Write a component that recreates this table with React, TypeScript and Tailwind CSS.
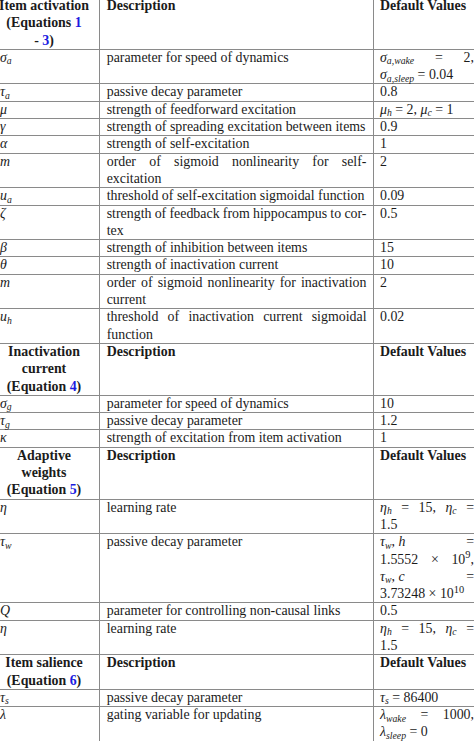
import type { ReactNode } from 'react'

// Parameter table, cropped on both sides like the source figure
const LINE = 'leading-[17.29px]'

function V({ b, s }: { b: string; s?: string }) {
  return (
    <span className="whitespace-nowrap">
      <i>{b}</i>
      {s && (
        <sub className="text-[70%]">
          <i>{s}</i>
        </sub>
      )}
    </span>
  )
}

function L({ children }: { children: ReactNode }) {
  return <div className="whitespace-nowrap">{children}</div>
}

function J({ parts }: { parts: ReactNode[] | string }) {
  const items = typeof parts === 'string' ? parts.split(' ') : parts
  return (
    <div className="flex justify-between whitespace-nowrap">
      {items.map((p, i) => (
        <span key={i}>{p}</span>
      ))}
    </div>
  )
}

function Ref({ n }: { n: string }) {
  return <span className="text-[#1c1ce0]">{n}</span>
}

function Row({ c1, c2, c3, head }: { c1: ReactNode; c2: ReactNode; c3: ReactNode; head?: boolean }) {
  return (
    <div className="border-t border-[#8a8a8a]">
      <div className={`-mt-px grid grid-cols-[111px_274px_1fr] ${head ? 'font-bold' : ''}`}>
        <div className={`border-r border-[#8a8a8a] ${head ? 'pl-[7px] pr-[7px] text-center' : 'pl-[11px] pr-[5px]'}`}>{c1}</div>
        <div className="border-r border-[#8a8a8a] pl-[6.7px] pr-[6.5px]">{c2}</div>
        <div className="pl-[6px] pr-[7px]">{c3}</div>
      </div>
    </div>
  )
}

const eta = (
  <>
    <J parts={[<V b="η" s="h" />, '=', '15,', <V b="η" s="c" />, '=']} />
    <L>1.5</L>
  </>
)

export default function App() {
  return (
    <div className="h-[741px] w-[474px] overflow-hidden bg-white">
      <div
        className={`-ml-[11px] -mt-[3px] w-[492px] font-['Liberation_Serif','Times_New_Roman',serif] text-[13.9px] text-[#1b1b1b] ${LINE}`}
      >
        <Row
          head
          c1={
            <>
              <L>Item activation</L>
              <L>
                (Equations <Ref n="1" />
              </L>
              <L>
                - <Ref n="3" />)
              </L>
            </>
          }
          c2={<L>Description</L>}
          c3={<L>Default Values</L>}
        />
        <Row
          c1={<V b="σ" s="a" />}
          c2={<L>parameter for speed of dynamics</L>}
          c3={
            <>
              <J parts={[<V b="σ" s="a,wake" />, '=', '2,']} />
              <L>
                <V b="σ" s="a,sleep" /> = 0.04
              </L>
            </>
          }
        />
        <Row c1={<V b="τ" s="a" />} c2={<L>passive decay parameter</L>} c3={<L>0.8</L>} />
        <Row
          c1={<V b="μ" />}
          c2={<L>strength of feedforward excitation</L>}
          c3={
            <L>
              <V b="μ" s="h" /> = 2, <V b="μ" s="c" /> = 1
            </L>
          }
        />
        <Row c1={<V b="γ" />} c2={<L>strength of spreading excitation between items</L>} c3={<L>0.9</L>} />
        <Row c1={<V b="α" />} c2={<L>strength of self-excitation</L>} c3={<L>1</L>} />
        <Row
          c1={<V b="m" />}
          c2={
            <>
              <J parts="order of sigmoid nonlinearity for self-" />
              <L>excitation</L>
            </>
          }
          c3={<L>2</L>}
        />
        <Row c1={<V b="u" s="a" />} c2={<L>threshold of self-excitation sigmoidal function</L>} c3={<L>0.09</L>} />
        <Row
          c1={<V b="ζ" />}
          c2={
            <>
              <J parts="strength of feedback from hippocampus to cor-" />
              <L>tex</L>
            </>
          }
          c3={<L>0.5</L>}
        />
        <Row c1={<V b="β" />} c2={<L>strength of inhibition between items</L>} c3={<L>15</L>} />
        <Row c1={<V b="θ" />} c2={<L>strength of inactivation current</L>} c3={<L>10</L>} />
        <Row
          c1={<V b="m" />}
          c2={
            <>
              <J parts="order of sigmoid nonlinearity for inactivation" />
              <L>current</L>
            </>
          }
          c3={<L>2</L>}
        />
        <Row
          c1={<V b="u" s="h" />}
          c2={
            <>
              <J parts="threshold of inactivation current sigmoidal" />
              <L>function</L>
            </>
          }
          c3={<L>0.02</L>}
        />
        <Row
          head
          c1={
            <>
              <L>Inactivation</L>
              <L>current</L>
              <L>
                (Equation <Ref n="4" />)
              </L>
            </>
          }
          c2={<L>Description</L>}
          c3={<L>Default Values</L>}
        />
        <Row c1={<V b="σ" s="g" />} c2={<L>parameter for speed of dynamics</L>} c3={<L>10</L>} />
        <Row c1={<V b="τ" s="g" />} c2={<L>passive decay parameter</L>} c3={<L>1.2</L>} />
        <Row c1={<V b="κ" />} c2={<L>strength of excitation from item activation</L>} c3={<L>1</L>} />
        <Row
          head
          c1={
            <>
              <L>Adaptive</L>
              <L>weights</L>
              <L>
                (Equation <Ref n="5" />)
              </L>
            </>
          }
          c2={<L>Description</L>}
          c3={<L>Default Values</L>}
        />
        <Row c1={<V b="η" />} c2={<L>learning rate</L>} c3={eta} />
        <Row
          c1={<V b="τ" s="w" />}
          c2={<L>passive decay parameter</L>}
          c3={
            <>
              <J
                parts={[
                  <>
                    <V b="τ" s="w" />, <i>h</i>
                  </>,
                  '=',
                ]}
              />
              <J
                parts={[
                  '1.5552',
                  '×',
                  <>
                    10<sup>9</sup>,
                  </>,
                ]}
              />
              <J
                parts={[
                  <>
                    <V b="τ" s="w" />, <i>c</i>
                  </>,
                  '=',
                ]}
              />
              <L>
                3.73248 × 10<sup>10</sup>
              </L>
            </>
          }
        />
        <Row c1={<V b="Q" />} c2={<L>parameter for controlling non-causal links</L>} c3={<L>0.5</L>} />
        <Row c1={<V b="η" />} c2={<L>learning rate</L>} c3={eta} />
        <Row
          head
          c1={
            <>
              <L>Item salience</L>
              <L>
                (Equation <Ref n="6" />)
              </L>
            </>
          }
          c2={<L>Description</L>}
          c3={<L>Default Values</L>}
        />
        <Row
          c1={<V b="τ" s="s" />}
          c2={<L>passive decay parameter</L>}
          c3={
            <L>
              <V b="τ" s="s" /> = 86400
            </L>
          }
        />
        <Row
          c1={<V b="λ" />}
          c2={<L>gating variable for updating</L>}
          c3={
            <>
              <J parts={[<V b="λ" s="wake" />, '=', '1000,']} />
              <L>
                <V b="λ" s="sleep" /> = 0
              </L>
            </>
          }
        />
      </div>
    </div>
  )
}
